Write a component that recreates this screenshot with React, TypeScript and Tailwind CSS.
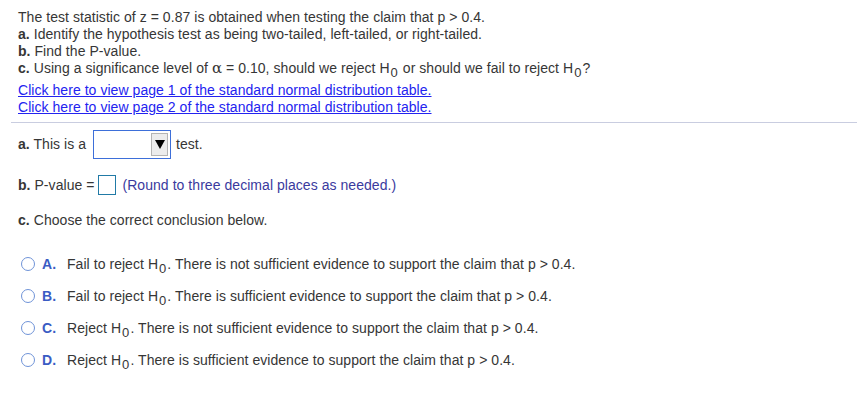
import React from 'react';

const OPTIONS = [
  { key: 'A', head: 'Fail to reject', body: 'There is not sufficient evidence to support the claim that p > 0.4.' },
  { key: 'B', head: 'Fail to reject', body: 'There is sufficient evidence to support the claim that p > 0.4.' },
  { key: 'C', head: 'Reject', body: 'There is not sufficient evidence to support the claim that p > 0.4.' },
  { key: 'D', head: 'Reject', body: 'There is sufficient evidence to support the claim that p > 0.4.' },
];

function H0() {
  return (
    <span>
      H<span className="relative top-[4px] ml-[1px] mr-[1px] text-[13px]">0</span>
    </span>
  );
}

export default function App() {
  return (
    <div className="h-[412px] w-[857px] bg-white font-['Liberation_Sans',Arial,sans-serif] text-[14px] tracking-[0.05px] text-[#363636]">
      <div className="pl-[18px] pt-[9px] leading-[17px]">
        <div className="h-[17px]">The test statistic of z = 0.87 is obtained when testing the claim that p &gt; 0.4.</div>
        <div className="h-[17px]">
          <b>a.</b> Identify the hypothesis test as being two-tailed, left-tailed, or right-tailed.
        </div>
        <div className="h-[17px]">
          <b>b.</b> Find the P-value.
        </div>
        <div className="h-[18px]">
          <b>c.</b> Using a significance level of <span className="font-['DejaVu_Serif',serif] text-[15px]">α</span> = 0.10, should
          we reject <H0 /> or should we fail to reject <H0 />?
        </div>
        <div className="mt-[4px] flex flex-col text-[#2323f0]">
          <a href="#" className="h-[17px] underline">Click here to view page 1 of the standard normal distribution table.</a>
          <a href="#" className="h-[17px] underline">Click here to view page 2 of the standard normal distribution table.</a>
        </div>
      </div>

      <div className="ml-[11px] mt-[6px] h-px bg-[#c9cde0]" />

      <div className="pl-[18px]">
        <div className="mt-[7px] flex h-[29px] items-center">
          <span>
            <b>a.</b> This is a
          </span>
          <div className="ml-[7px] flex h-[29px] w-[78px] items-center justify-end border border-[#3d6fd9] bg-white pr-[2px]">
            <div className="flex h-[23px] w-[17px] items-center justify-center border border-[#b4b4b4] bg-[#ececec]">
              <svg width="10" height="9" viewBox="0 0 10 9">
                <path d="M0 0 H10 L5 9 Z" fill="#000" />
              </svg>
            </div>
          </div>
          <span className="ml-[5px]">test.</span>
        </div>

        <div className="mt-[16px] flex h-[20px] items-center">
          <span>
            <b>b.</b> P-value =
          </span>
          <div className="ml-[4px] h-[20px] w-[18px] border border-[#217aa6] bg-white" />
          <span className="ml-[6px] text-[#3a3a9e]">(Round to three decimal places as needed.)</span>
        </div>

        <div className="mt-[15px] h-[17px]">
          <b>c.</b> Choose the correct conclusion below.
        </div>

        <div className="mt-[28px] flex flex-col gap-[14px]">
          {OPTIONS.map((o) => (
            <div key={o.key} className="flex h-[18px] items-center">
              <span className="ml-[3px] inline-block h-[14px] w-[14px] rounded-full border-[1.5px] border-[#6f93d8] bg-white" />
              <b className="ml-[7px] w-[25px] text-[#3a5cc4]">{o.key}.</b>
              <span>
                {o.head} <H0 />. {o.body}
              </span>
            </div>
          ))}
        </div>
      </div>
    </div>
  );
}
